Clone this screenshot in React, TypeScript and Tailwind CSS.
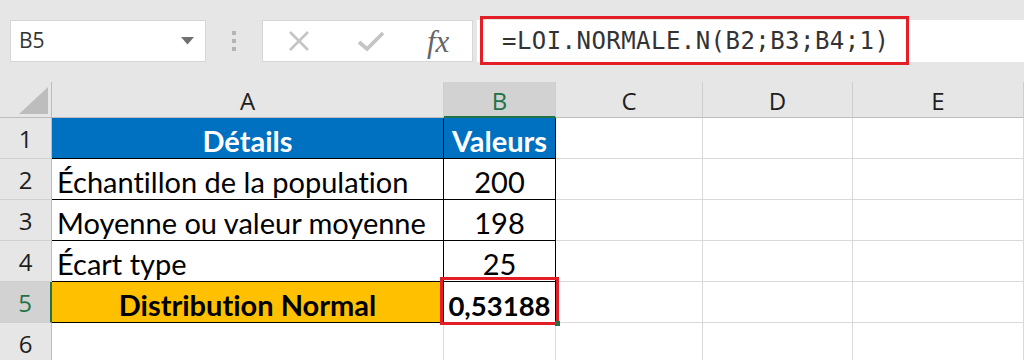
import type { ReactNode } from "react";

const FONT_UI = "font-['Open_Sans','Noto_Sans',sans-serif]";
const FONT_CELL = "font-['Lato','Noto_Sans',sans-serif] [font-variant-ligatures:none]";

function ColHeader({ label, selected = false }: { label: string; selected?: boolean }) {
  return (
    <div
      className={`flex items-center justify-center border-r border-[#cfcfcf] text-[24px] leading-none ${
        selected
          ? "bg-[#d2d2d2] text-[#217346] border-b-2 border-b-[#217346]"
          : "bg-[#e6e6e6] text-[#1e1e1e] border-b border-b-[#bdbdbd]"
      }`}
    >
      <span className="pt-[3px]">{label}</span>
    </div>
  );
}

function RowHeader({ n, selected = false }: { n: number; selected?: boolean }) {
  return (
    <div
      className={`flex items-center justify-center pt-[2px] border-b border-[#d0d0d0] text-[24px] leading-none ${
        selected
          ? "bg-[#d2d2d2] text-[#217346] border-r-2 border-r-[#217346]"
          : "bg-[#e6e6e6] text-[#1e1e1e] border-r border-r-[#bdbdbd]"
      }`}
    >
      {n}
    </div>
  );
}

function Cell({
  children,
  className = "",
}: {
  children?: ReactNode;
  className?: string;
}) {
  return (
    <div
      className={`relative flex items-end pb-[3px] leading-none text-black ${FONT_CELL} ${className}`}
    >
      {children}
    </div>
  );
}

const EMPTY = "bg-white border-r border-b border-[#d9d9d9]";
const TABLE = "border-r border-b border-black text-[29px]";

export default function App() {
  return (
    <div className={`w-[1024px] h-[360px] overflow-hidden bg-[#e6e6e6] ${FONT_UI}`}>
      {/* Formula bar */}
      <div className="flex items-center h-[82px]">
        <div className="ml-[10px] w-[196px] h-[42px] bg-white border border-[#d6d6d6] flex items-center justify-between pl-[8px] pr-[11px]">
          <span className="text-[21px] text-[#333]">B5</span>
          <svg width="13" height="8" viewBox="0 0 13 8">
            <path d="M0 0h13L6.5 7.5z" fill="#707070" />
          </svg>
        </div>
        <div className="ml-[26px] flex flex-col gap-[4px]">
          <div className="w-[4px] h-[4px] bg-[#b4b4b4]" />
          <div className="w-[4px] h-[4px] bg-[#b4b4b4]" />
          <div className="w-[4px] h-[4px] bg-[#b4b4b4]" />
        </div>
        <div className="ml-[26px] w-[211px] h-[42px] bg-white border border-[#d6d6d6] flex items-center">
          <svg className="ml-[25px]" width="22" height="22" viewBox="0 0 22 22">
            <path d="M2 2L20 20M20 2L2 20" stroke="#c4c4c4" strokeWidth="2.6" />
          </svg>
          <svg className="ml-[47px]" width="28" height="22" viewBox="0 0 28 22">
            <path d="M2 12L10 19L26 3" stroke="#c4c4c4" strokeWidth="3.8" fill="none" />
          </svg>
          <span className="ml-[42px] text-[31px] italic leading-none text-[#666] font-['Liberation_Serif',serif]">
            fx
          </span>
        </div>
        <div className="ml-[4px] flex-1 h-[42px] bg-white relative">
          <div className="absolute left-[3px] -top-[4px] w-[429px] h-[49px] border-[3px] border-[#e41e26] flex items-center pl-[19px]">
            <span className="text-[24px] tracking-[0.45px] text-[#333] font-['DejaVu_Sans_Mono','Liberation_Mono',monospace]">
              =LOI.NORMALE.N(B2;B3;B4;1)
            </span>
          </div>
        </div>
      </div>

      {/* Grid */}
      <div className="grid grid-cols-[52px_392px_112px_147px_150px_1fr] grid-rows-[36px_41px_41px_41px_41px_41px_41px]">
        <div className="bg-[#e6e6e6] border-r border-b border-[#bdbdbd] flex items-end justify-end pr-[3px] pb-[3px]">
          <svg width="29" height="27" viewBox="0 0 29 27">
            <path d="M29 0V27H0z" fill="#bdbdbd" />
          </svg>
        </div>
        <ColHeader label="A" />
        <ColHeader label="B" selected />
        <ColHeader label="C" />
        <ColHeader label="D" />
        <ColHeader label="E" />

        {/* Row 1 */}
        <RowHeader n={1} />
        <Cell className={`justify-center bg-[#0070c0] font-bold ${TABLE}`}>
          <span className="text-white">Détails</span>
        </Cell>
        <Cell className={`justify-center bg-[#0070c0] font-bold ${TABLE}`}>
          <span className="text-white">Valeurs</span>
        </Cell>
        <div className={EMPTY} />
        <div className={EMPTY} />
        <div className={EMPTY} />

        {/* Row 2 */}
        <RowHeader n={2} />
        <Cell className={`pl-[5px] bg-white ${TABLE}`}>Échantillon de la population</Cell>
        <Cell className={`justify-center bg-white ${TABLE}`}>200</Cell>
        <div className={EMPTY} />
        <div className={EMPTY} />
        <div className={EMPTY} />

        {/* Row 3 */}
        <RowHeader n={3} />
        <Cell className={`pl-[5px] bg-white ${TABLE}`}>Moyenne ou valeur moyenne</Cell>
        <Cell className={`justify-center bg-white ${TABLE}`}>198</Cell>
        <div className={EMPTY} />
        <div className={EMPTY} />
        <div className={EMPTY} />

        {/* Row 4 */}
        <RowHeader n={4} />
        <Cell className={`pl-[5px] bg-white ${TABLE}`}>Écart type</Cell>
        <Cell className={`justify-center bg-white ${TABLE}`}>25</Cell>
        <div className={EMPTY} />
        <div className={EMPTY} />
        <div className={EMPTY} />

        {/* Row 5 */}
        <RowHeader n={5} selected />
        <Cell className={`justify-center bg-[#ffc000] font-bold ${TABLE}`}>
          Distribution Normal
        </Cell>
        <Cell className="justify-center bg-white font-bold text-[27.5px] border-r border-b border-black">
          0,53188
          <div className="absolute -left-[4px] -top-[5px] -right-[4px] -bottom-[3px] border-[3px] border-[#e41e26]" />
          <div className="absolute -right-[5px] -bottom-[4px] w-[5px] h-[5px] bg-[#217346]" />
        </Cell>
        <div className={EMPTY} />
        <div className={EMPTY} />
        <div className={EMPTY} />

        {/* Row 6 */}
        <RowHeader n={6} />
        <div className={EMPTY} />
        <div className={EMPTY} />
        <div className={EMPTY} />
        <div className={EMPTY} />
        <div className={EMPTY} />
      </div>
    </div>
  );
}
